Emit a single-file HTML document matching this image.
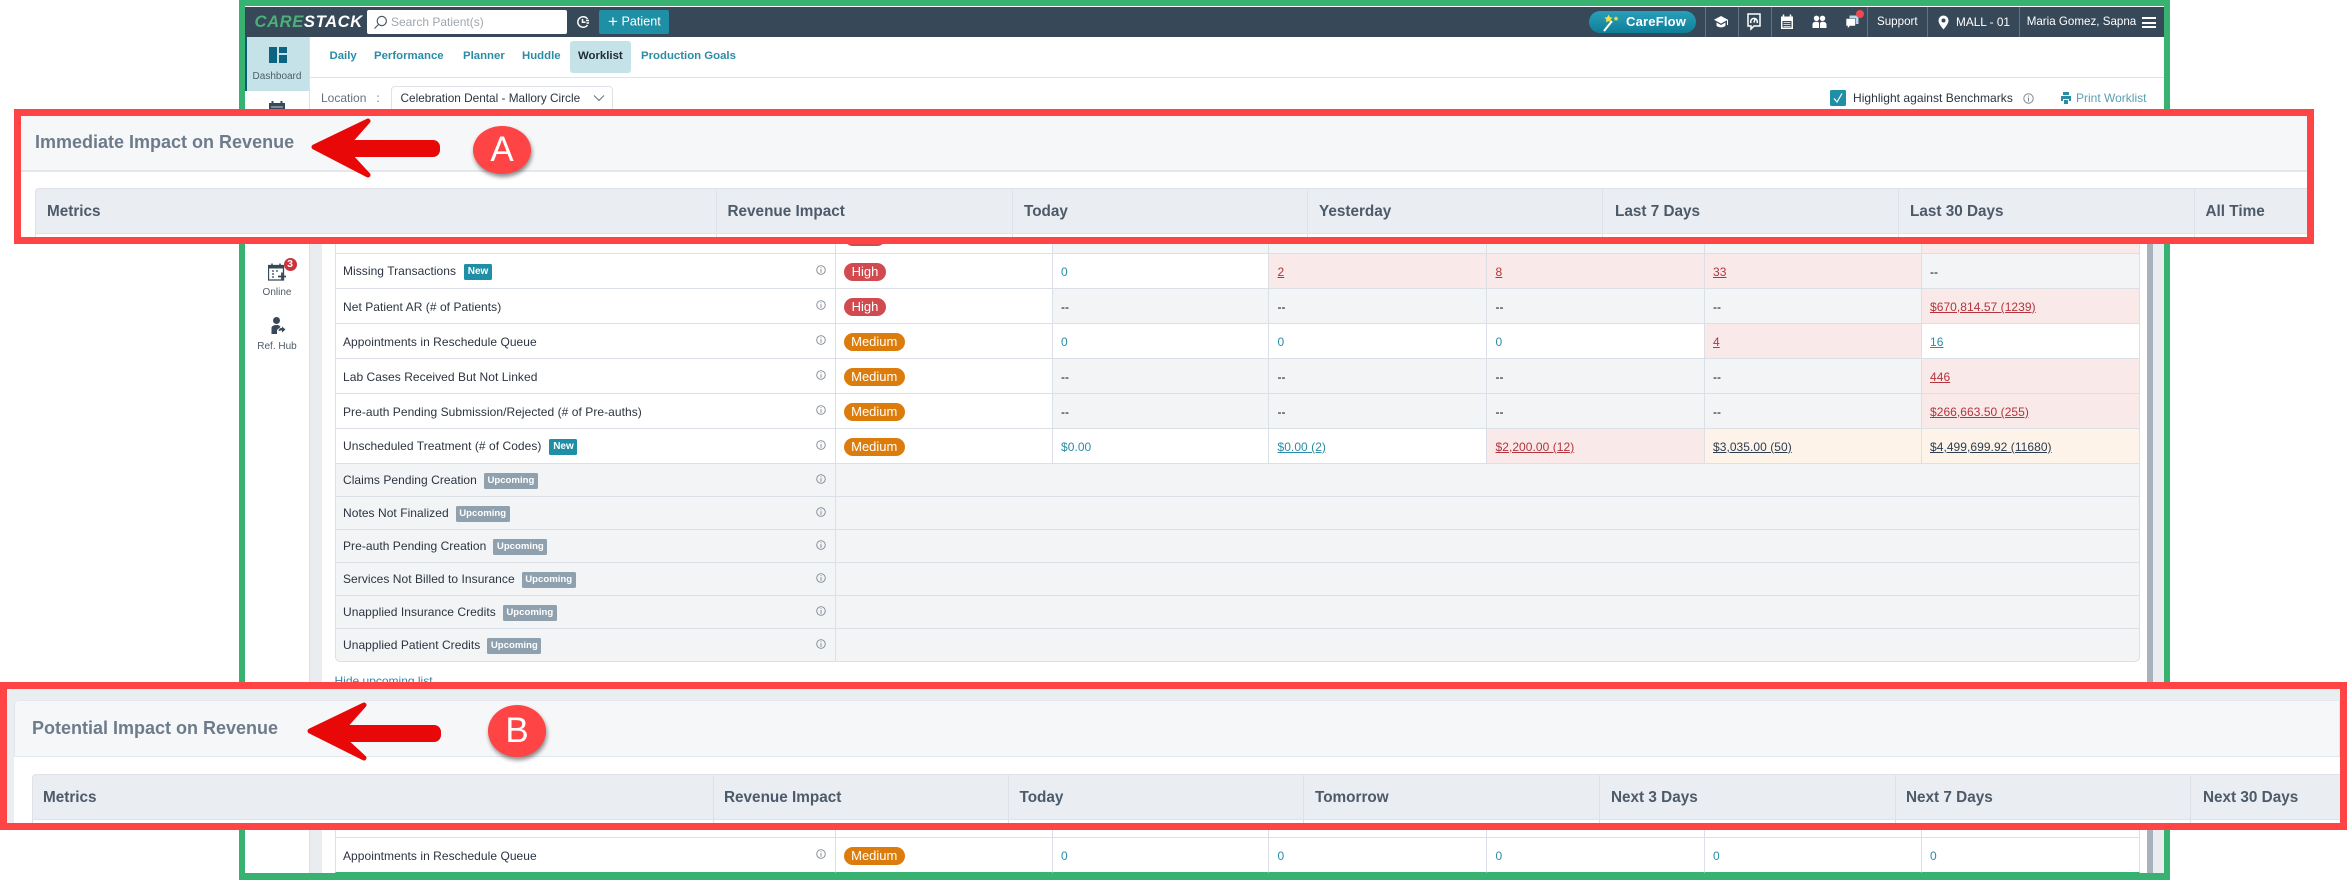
<!DOCTYPE html>
<html lang="en"><head><meta charset="utf-8"><title>Worklist</title>
<style>
html,body{margin:0;padding:0;background:#fff;width:2347px;height:880px;overflow:hidden}
body{position:relative;font-family:"Liberation Sans",sans-serif;font-size:12px;color:#2b3440}
.a{position:absolute}
.t{position:absolute;white-space:nowrap;transform:translateY(-50%);line-height:1.2}
.nav{font-weight:bold;font-size:11.4px;color:#2b8ca5}
.side{font-size:10px;color:#4f5c69;text-align:center;width:64px;left:245px}
.w{color:#fff}
.vd{position:absolute;top:7px;height:30px;width:1px;background:#66727f}
table.g{position:absolute;left:334.5px;border-collapse:separate;border-spacing:0;table-layout:fixed;width:1805px;font-size:12px;letter-spacing:.05px;color:#2b3440}
table.g td{box-sizing:border-box;border-right:1px solid #dbe0e7;border-bottom:1px solid #dbe0e7;padding:1.5px 0 0 8.5px;white-space:nowrap;position:relative;height:35px;background:#fff}
table.g td:first-child{border-left:1px solid #dbe0e7;padding-left:7.5px}
table.g td.n{background:#f3f4f6;color:#000}
table.g td.p{background:#f9e9e9}
table.g td.c{background:#fdf3e8}
table.g tr.u td{height:33px;background:#f3f4f6}
.red{color:#b5343c;text-decoration:underline}
.tl{color:#2b8ca5}
.tlu{color:#2b8ca5;text-decoration:underline}
.dk{color:#2d3e50;text-decoration:underline}
.pill{display:inline-block;height:18px;line-height:18px;border-radius:9px;color:#fff;font-size:13px;letter-spacing:0;text-align:center;vertical-align:middle}
.hi{width:42px;background:#d04a50}
.me{width:60.5px;background:#dc7c0c}
.bn{display:inline-block;width:28px;height:16px;line-height:16px;background:#1f8fa6;color:#fff;font-weight:bold;font-size:10px;letter-spacing:0;border-radius:1.5px;text-align:center;margin-left:8px;vertical-align:middle}
.bu{display:inline-block;width:54px;height:16px;line-height:16px;background:#8fa0ae;color:#fff;font-weight:bold;font-size:9.6px;letter-spacing:0;border-radius:1.5px;text-align:center;margin-left:7px;vertical-align:middle}
.i{position:absolute;left:480.5px;top:50%;margin-top:-6.5px;width:10px;height:10px}
.box{position:absolute;box-sizing:border-box;border:7px solid #fe4444}
.th{position:absolute;top:0;height:100%;border-left:1px solid #dfe3e9;box-sizing:border-box}
.hd{font-weight:bold;color:#4d5a69;font-size:15.3px}
.ttl{font-weight:bold;color:#6d7b8b;font-size:18px}
.thead{position:absolute;height:49px;border-top:1px solid #dfe3e9;border-left:1px solid #dfe3e9;border-radius:4px 0 0 0;box-sizing:border-box;background:linear-gradient(#eaedf1 44px,#dfe3e9 44px,#dfe3e9 45px,#fff 45px)}
.circ{position:absolute;background:#fe4444;border-radius:50%;color:#fff;text-align:center;box-shadow:1px 3px 4px rgba(0,0,0,.45)}
</style></head><body>

<!-- green frame -->
<div class="a" style="left:239px;top:0;width:1931px;height:880px;background:#38b271"></div>
<div class="a" style="left:245px;top:6px;width:1919px;height:867px;background:#fff"></div>

<!-- top bar -->
<div class="a" style="left:245px;top:7px;width:1919px;height:30px;background:#374859"></div>
<div class="t" style="left:254.5px;top:22px;font-weight:bold;font-style:italic;font-size:16.6px;letter-spacing:.6px;color:#4caf78">CARE<span style="color:#fff">STACK</span></div>
<div class="a" style="left:367px;top:10px;width:200px;height:24px;background:#fff;border-radius:2px"></div>
<svg class="a" style="left:373px;top:15px" width="15" height="15" viewBox="0 0 15 15" fill="none" stroke="#4a5866" stroke-width="1.2"><circle cx="8.8" cy="6" r="4.6"/><path d="M5.5 9.5L1.5 13.5"/></svg>
<div class="t" style="left:391px;top:22px;color:#a0a7ad">Search Patient(s)</div>
<svg class="a" style="left:576px;top:15px" width="14" height="14" viewBox="0 0 14 14" fill="none" stroke="#fff" stroke-width="1.5"><path d="M11.5 4A5.3 5.3 0 1 0 11.5 10"/><path d="M6.5 4v3.3h3M10 5.5h3M10.5 8h2.5"/></svg>
<div class="a" style="left:599px;top:10px;width:70px;height:24px;background:#1f8fa6;border-radius:2px"></div>
<div class="t w" style="left:608px;top:22px;font-size:17px">+</div>
<div class="t w" style="left:621.5px;top:22px;font-size:12.6px">Patient</div>

<div class="a" style="left:1589px;top:11px;width:107px;height:22px;border-radius:11px;background:linear-gradient(#2a9fba,#0f7f98)"></div>
<svg class="a" style="left:1603px;top:13px" width="18" height="20" viewBox="0 0 18 20"><path d="M1 18L9 8" stroke="#fff" stroke-width="2" fill="none"/><path d="M5.5 1.5l1.3 2.7 2.8.4-2 2 .5 2.8-2.6-1.4-2.600 1.4.5-2.8-2-2 2.800-.4z" fill="#f5e042"/><path d="M13 3l.8 1.600 1.700.3-1.200 1.200.3 1.700-1.600-.8-1.600.8.300-1.700-1.200-1.200 1.700-.3z" fill="#f5e042"/></svg>
<div class="t w" style="left:1626px;top:22px;font-weight:bold;font-size:13px;letter-spacing:.2px">CareFlow</div>

<div class="vd" style="left:1705px"></div><div class="vd" style="left:1738px"></div><div class="vd" style="left:1771px"></div><div class="vd" style="left:1867px"></div><div class="vd" style="left:1927px"></div><div class="vd" style="left:2019px"></div>

<svg class="a" style="left:1714px;top:15px" width="15" height="14" viewBox="0 0 15 14" fill="#fff"><path d="M7 1L0 4.800 7 8.600 13 5.300V10h1V4.800z"/><path d="M2.500 7.500v3C4 13 10 13 11.500 10.500v-3L7 10z"/></svg>
<svg class="a" style="left:1747px;top:13px" width="14" height="18" viewBox="0 0 14 18" fill="none" stroke="#fff" stroke-width="1.500"><path d="M1 1h12v12H7l-3 3v-3H1z"/><path d="M4 10A3.300 3.300 0 1 1 10 10M7 9.500L8.300 5"/></svg>
<svg class="a" style="left:1780px;top:14px" width="14" height="16" viewBox="0 0 14 16"><path d="M1 2.500h12V15H1z" fill="#fff"/><path d="M3.500 0.500v3M10.500 0.500v3" stroke="#fff" stroke-width="1.500"/><path d="M2.500 7h9v6.500h-9z" fill="#374859"/><path d="M3.500 8.500h7M3.500 10.500h7M3.500 12.500h7" stroke="#fff" stroke-width=".8"/></svg>
<svg class="a" style="left:1812px;top:15px" width="15" height="14" viewBox="0 0 15 14" fill="#fff"><circle cx="4.500" cy="3.300" r="2.700"/><circle cx="10.500" cy="3.300" r="2.700"/><path d="M.5 13V9.500C.5 7.500 2 6.700 4.500 6.700S7 7.500 7 9.500V13zM8 13V9.500C8 7.500 8.500 6.700 10.500 6.700S14.500 7.500 14.500 9.500V13z"/></svg>
<svg class="a" style="left:1845px;top:15px" width="14" height="15" viewBox="0 0 14 15"><path d="M4.500 0.500H13.500V9H4.500z" fill="#b8d8e8"/><path d="M1 3.500H10.500V11H5L2.500 14V11H1z" fill="#fff" stroke="#374859" stroke-width=".6"/></svg>
<div class="a" style="left:1856px;top:10px;width:8px;height:8px;border-radius:50%;background:#f0484f"></div>
<div class="t w" style="left:1877px;top:22px;font-size:11.6px">Support</div>
<svg class="a" style="left:1938px;top:15px" width="11" height="15" viewBox="0 0 11 15"><path d="M5.500 0.500A5 5 0 0 1 10.500 5.500C10.500 8.500 7.500 12 5.500 14.500 3.500 12 .5 8.500 .5 5.500A5 5 0 0 1 5.500 .5z" fill="#fff"/><circle cx="5.500" cy="5.500" r="2" fill="#374859"/></svg>
<div class="t w" style="left:1956px;top:22px;font-size:11.8px">MALL - 01</div>
<div class="t w" style="left:2026.7px;top:22px;font-size:11.6px">Maria Gomez, Sapna</div>
<div class="a" style="left:2142px;top:17px;width:14px;height:2px;background:#fff"></div>
<div class="a" style="left:2142px;top:21.500px;width:14px;height:2px;background:#fff"></div>
<div class="a" style="left:2142px;top:26px;width:14px;height:2px;background:#fff"></div>

<!-- sidebar -->
<div class="a" style="left:309px;top:37px;width:1px;height:836px;background:#dde1e7"></div>
<div class="a" style="left:245px;top:37px;width:64px;height:54px;background:#c5e2e8;box-sizing:border-box;border-left:2px solid #0d5f78"></div>
<svg class="a" style="left:269px;top:47px" width="18" height="16" viewBox="0 0 18 16" fill="#0d6480"><path d="M0 0h8v16H0zM10 0h8v6h-8zM10 8h8v8h-8z"/></svg>
<div class="t side" style="top:76.5px">Dashboard</div>
<svg class="a" style="left:269px;top:101px" width="16" height="14" viewBox="0 0 16 14"><path d="M0 2h16v14H0z" fill="#374859"/><path d="M3.500 0v3M12.500 0v3" stroke="#374859" stroke-width="2"/><path d="M2 6h12" stroke="#c5d0d8"/></svg>
<svg class="a" style="left:268px;top:263px" width="20" height="18" viewBox="0 0 20 18"><path d="M.5 2.500h15V17H.5z" fill="none" stroke="#374859" stroke-width="1.300"/><path d="M.5 2.500h15v3H.5z" fill="#374859"/><path d="M4 .5v3M12 .5v3" stroke="#374859" stroke-width="1.500"/><path d="M4 8h2M4 11h2M4 14h2M8 8h2" stroke="#374859" stroke-width="1.300"/><path d="M10 13.500h8M14 9.500v8" stroke="#374859" stroke-width="1.800"/></svg>
<div class="a" style="left:283.500px;top:258px;width:13px;height:13px;border-radius:50%;background:#c9343c;color:#fff;font-size:10.500px;line-height:13px;text-align:center;font-weight:bold">3</div>
<div class="t side" style="top:292.5px">Online</div>
<svg class="a" style="left:268px;top:317px" width="18" height="17" viewBox="0 0 18 17" fill="#374859"><circle cx="8.500" cy="3.500" r="3.500"/><path d="M3.500 17V11C3.500 9 6 8 8.500 8S12 9 12.500 10L9 13v4z"/><path d="M10.500 14A3 3 0 0 1 14 11V9.500L17.500 12.500 14 15.500V13.500C13 13.500 11.500 13.800 10.500 14z"/></svg>
<div class="t side" style="top:346.5px">Ref. Hub</div>

<!-- sub nav -->
<div class="a" style="left:310px;top:77px;width:1854px;height:1px;background:#dfe2ea"></div>
<div class="t nav" style="left:329.500px;top:57px">Daily</div>
<div class="t nav" style="left:374px;top:57px">Performance</div>
<div class="t nav" style="left:463px;top:57px">Planner</div>
<div class="t nav" style="left:522px;top:57px">Huddle</div>
<div class="a" style="left:570px;top:41px;width:61px;height:32px;background:#c5e2e8;border-radius:3px"></div>
<div class="t nav" style="left:578px;top:57px;color:#1f2a36">Worklist</div>
<div class="t nav" style="left:641px;top:57px">Production Goals</div>

<div class="t" style="left:321px;top:98px;color:#66717d;font-size:12px">Location &nbsp;&nbsp;:</div>
<div class="a" style="left:391px;top:86px;width:222px;height:30px;border:1px solid #dfe2e8;border-radius:4px;box-sizing:border-box"></div>
<div class="t" style="left:400.500px;top:98px;color:#2b3440;font-size:11.8px">Celebration Dental - Mallory Circle</div>
<svg class="a" style="left:593px;top:94px" width="12" height="8" viewBox="0 0 12 8" fill="none" stroke="#66717d"><path d="M1 1.500L6 6.500 11 1.500"/></svg>

<div class="a" style="left:1830px;top:90px;width:16px;height:16px;background:#1f8fa6;border-radius:1.500px"></div>
<svg class="a" style="left:1832px;top:92px" width="12" height="12" viewBox="0 0 12 12" fill="none" stroke="#fff" stroke-width="1.200"><path d="M2 6.500L5 10 10 1.500"/></svg>
<div class="t" style="left:1853px;top:98px;font-size:12px;letter-spacing:.04px;color:#2b3440">Highlight against Benchmarks</div>
<svg class="a" style="left:2023px;top:93px" width="11" height="11" viewBox="0 0 11 11" fill="none" stroke="#7d8791"><circle cx="5.500" cy="5.500" r="4.700"/><path d="M5.500 4.500v4M5.500 2.500v1"/></svg>
<svg class="a" style="left:2061px;top:92px" width="10" height="12" viewBox="0 0 10 12" fill="#2b8ca5"><path d="M2 0h6v3H2zM0 4h10v5H8V7H2v2H0zM3 8h4v4H3z"/></svg>
<div class="t" style="left:2076px;top:98px;color:#5a9fb2;font-size:12px">Print Worklist</div>

<!-- body strip & scrollbar -->
<div class="a" style="left:310px;top:112px;width:12px;height:761px;background:#e9edf0"></div>
<div class="a" style="left:2147px;top:112px;width:6px;height:761px;background:#a8b2bc"></div>
<div class="a" style="left:2153px;top:112px;width:11px;height:761px;background:#e9edf0"></div>

<!-- immediate table -->
<table class="g" style="top:219px">
<colgroup><col style="width:501px"><col style="width:217px"><col style="width:216.500px"><col style="width:218px"><col style="width:217.500px"><col style="width:217px"><col style="width:218px"></colgroup>
<tr><td></td><td><span class="pill hi">High</span></td><td class="n"></td><td class="n"></td><td class="n"></td><td class="n"></td><td class="p"></td></tr>
<tr><td>Missing Transactions<span class="bn">New</span><svg class="i" viewBox="0 0 11 11" fill="none" stroke="#7d8791"><circle cx="5.500" cy="5.500" r="4.700"/><path d="M5.500 4.500v4M5.500 2.500v1"/></svg></td><td><span class="pill hi">High</span></td><td class="tl">0</td><td class="p"><span class="red">2</span></td><td class="p"><span class="red">8</span></td><td class="p"><span class="red">33</span></td><td class="n">--</td></tr>
<tr><td>Net Patient AR (# of Patients)<svg class="i" viewBox="0 0 11 11" fill="none" stroke="#7d8791"><circle cx="5.500" cy="5.500" r="4.700"/><path d="M5.500 4.500v4M5.500 2.500v1"/></svg></td><td><span class="pill hi">High</span></td><td class="n">--</td><td class="n">--</td><td class="n">--</td><td class="n">--</td><td class="p"><span class="red">$670,814.57 (1239)</span></td></tr>
<tr><td>Appointments in Reschedule Queue<svg class="i" viewBox="0 0 11 11" fill="none" stroke="#7d8791"><circle cx="5.500" cy="5.500" r="4.700"/><path d="M5.500 4.500v4M5.500 2.500v1"/></svg></td><td><span class="pill me">Medium</span></td><td class="tl">0</td><td class="tl">0</td><td class="tl">0</td><td class="p"><span class="red">4</span></td><td><span class="tlu">16</span></td></tr>
<tr><td>Lab Cases Received But Not Linked<svg class="i" viewBox="0 0 11 11" fill="none" stroke="#7d8791"><circle cx="5.500" cy="5.500" r="4.700"/><path d="M5.500 4.500v4M5.500 2.500v1"/></svg></td><td><span class="pill me">Medium</span></td><td class="n">--</td><td class="n">--</td><td class="n">--</td><td class="n">--</td><td class="p"><span class="red">446</span></td></tr>
<tr><td>Pre-auth Pending Submission/Rejected (# of Pre-auths)<svg class="i" viewBox="0 0 11 11" fill="none" stroke="#7d8791"><circle cx="5.500" cy="5.500" r="4.700"/><path d="M5.500 4.500v4M5.500 2.500v1"/></svg></td><td><span class="pill me">Medium</span></td><td class="n">--</td><td class="n">--</td><td class="n">--</td><td class="n">--</td><td class="p"><span class="red">$266,663.50 (255)</span></td></tr>
<tr><td>Unscheduled Treatment (# of Codes)<span class="bn">New</span><svg class="i" viewBox="0 0 11 11" fill="none" stroke="#7d8791"><circle cx="5.500" cy="5.500" r="4.700"/><path d="M5.500 4.500v4M5.500 2.500v1"/></svg></td><td><span class="pill me">Medium</span></td><td class="tl">$0.00</td><td><span class="tlu">$0.00 (2)</span></td><td class="p"><span class="red">$2,200.00 (12)</span></td><td class="c"><span class="dk">$3,035.00 (50)</span></td><td class="c"><span class="dk">$4,499,699.92 (11680)</span></td></tr>
<tr class="u"><td>Claims Pending Creation<span class="bu">Upcoming</span><svg class="i" viewBox="0 0 11 11" fill="none" stroke="#7d8791"><circle cx="5.500" cy="5.500" r="4.700"/><path d="M5.500 4.500v4M5.500 2.500v1"/></svg></td><td colspan="6"></td></tr>
<tr class="u"><td>Notes Not Finalized<span class="bu">Upcoming</span><svg class="i" viewBox="0 0 11 11" fill="none" stroke="#7d8791"><circle cx="5.500" cy="5.500" r="4.700"/><path d="M5.500 4.500v4M5.500 2.500v1"/></svg></td><td colspan="6"></td></tr>
<tr class="u"><td>Pre-auth Pending Creation<span class="bu">Upcoming</span><svg class="i" viewBox="0 0 11 11" fill="none" stroke="#7d8791"><circle cx="5.500" cy="5.500" r="4.700"/><path d="M5.500 4.500v4M5.500 2.500v1"/></svg></td><td colspan="6"></td></tr>
<tr class="u"><td>Services Not Billed to Insurance<span class="bu">Upcoming</span><svg class="i" viewBox="0 0 11 11" fill="none" stroke="#7d8791"><circle cx="5.500" cy="5.500" r="4.700"/><path d="M5.500 4.500v4M5.500 2.500v1"/></svg></td><td colspan="6"></td></tr>
<tr class="u"><td>Unapplied Insurance Credits<span class="bu">Upcoming</span><svg class="i" viewBox="0 0 11 11" fill="none" stroke="#7d8791"><circle cx="5.500" cy="5.500" r="4.700"/><path d="M5.500 4.500v4M5.500 2.500v1"/></svg></td><td colspan="6"></td></tr>
<tr class="u"><td style="border-bottom-left-radius:5px">Unapplied Patient Credits<span class="bu">Upcoming</span><svg class="i" viewBox="0 0 11 11" fill="none" stroke="#7d8791"><circle cx="5.500" cy="5.500" r="4.700"/><path d="M5.500 4.500v4M5.500 2.500v1"/></svg></td><td colspan="6" style="border-bottom-right-radius:5px"></td></tr>
</table>
<div class="t" style="left:334.500px;top:681px;color:#2b8ca5;font-size:12px">Hide upcoming list</div>

<!-- potential table row below box B -->
<table class="g" style="top:803px">
<colgroup><col style="width:501px"><col style="width:217px"><col style="width:216.500px"><col style="width:218px"><col style="width:217.500px"><col style="width:217px"><col style="width:218px"></colgroup>
<tr><td></td><td></td><td></td><td></td><td></td><td></td><td></td></tr>
<tr><td style="border-bottom-color:#38b271">Appointments in Reschedule Queue<svg class="i" viewBox="0 0 11 11" fill="none" stroke="#7d8791"><circle cx="5.500" cy="5.500" r="4.700"/><path d="M5.500 4.500v4M5.500 2.500v1"/></svg></td><td style="border-bottom-color:#38b271"><span class="pill me">Medium</span></td><td class="tl" style="border-bottom-color:#38b271">0</td><td class="tl" style="border-bottom-color:#38b271">0</td><td class="tl" style="border-bottom-color:#38b271">0</td><td class="tl" style="border-bottom-color:#38b271">0</td><td class="tl" style="border-bottom-color:#38b271">0</td></tr>
</table>

<!-- Box A -->
<div class="box" style="left:14px;top:109px;width:2300px;height:135px;background:#fff;overflow:hidden">
  <div class="a" style="left:0;top:0;width:2286px;height:54px;background:#f6f7f9;border-bottom:2px solid #e4e7eb"></div>
  <div class="t ttl" style="left:14px;top:26.5px">Immediate Impact on Revenue</div>
  <div class="thead" style="left:14px;top:72px;width:2272px">
    <div class="th" style="left:680px"></div><div class="th" style="left:976px"></div><div class="th" style="left:1271px"></div><div class="th" style="left:1566px"></div><div class="th" style="left:1862px"></div><div class="th" style="left:2158px"></div>
  </div>
  <div class="t hd" style="left:26px;top:95.5px">Metrics</div>
  <div class="t hd" style="left:706.500px;top:95.5px">Revenue Impact</div>
  <div class="t hd" style="left:1003px;top:95.5px">Today</div>
  <div class="t hd" style="left:1298px;top:95.5px">Yesterday</div>
  <div class="t hd" style="left:1594px;top:95.5px">Last 7 Days</div>
  <div class="t hd" style="left:1889px;top:95.5px">Last 30 Days</div>
  <div class="t hd" style="left:2184.500px;top:95.5px">All Time</div>
</div>
<svg class="a" style="left:300px;top:110px" width="150" height="76" viewBox="300 110 150 76"><path d="M314 147L368 121 349 142.500H400V154.500H349L368 175Z" fill="#e80808" stroke="#e80808" stroke-width="5" stroke-linejoin="round"/><rect x="380" y="140" width="60" height="17" rx="7" fill="#e80808"/></svg>
<div class="circ" style="left:473px;top:126px;width:58px;height:48px;font-size:35px;line-height:48px">A</div>

<!-- Box B -->
<div class="box" style="left:0;top:682px;width:2347px;height:148px;background:#ebeef1;overflow:hidden">
  <div class="a" style="left:7px;top:11px;width:2326px;height:57px;background:#f6f7f9;border:1px solid #e4e7eb;border-radius:5px 0 0 0;box-sizing:border-box"></div>
  <div class="a" style="left:7px;top:68px;width:2326px;height:66px;background:#fff"></div>
  <div class="t ttl" style="left:25px;top:39.5px">Potential Impact on Revenue</div>
  <div class="thead" style="left:25px;top:85px;width:2308px">
    <div class="th" style="left:680px"></div><div class="th" style="left:975px"></div><div class="th" style="left:1270px"></div><div class="th" style="left:1566px"></div><div class="th" style="left:1862px"></div><div class="th" style="left:2157px"></div>
  </div>
  <div class="t hd" style="left:36px;top:108.5px">Metrics</div>
  <div class="t hd" style="left:717px;top:108.5px">Revenue Impact</div>
  <div class="t hd" style="left:1012.5px;top:108.5px">Today</div>
  <div class="t hd" style="left:1308px;top:108.5px">Tomorrow</div>
  <div class="t hd" style="left:1604px;top:108.5px">Next 3 Days</div>
  <div class="t hd" style="left:1899px;top:108.5px">Next 7 Days</div>
  <div class="t hd" style="left:2196px;top:108.5px">Next 30 Days</div>
</div>
<svg class="a" style="left:296px;top:695px" width="155" height="76" viewBox="296 695 155 76"><path d="M310 731L364 705 344 727.500H400V739.500H344L364 758Z" fill="#e80808" stroke="#e80808" stroke-width="5" stroke-linejoin="round"/><rect x="381" y="725" width="60" height="17" rx="7" fill="#e80808"/></svg>
<div class="circ" style="left:488px;top:705px;width:58px;height:52px;font-size:35px;line-height:52px">B</div>

</body></html>
